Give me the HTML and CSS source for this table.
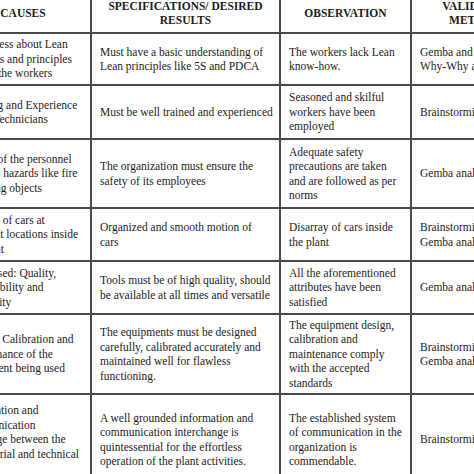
FILE: index.html
```html
<!DOCTYPE html>
<html>
<head>
<meta charset="utf-8">
<link rel="stylesheet" href="styles.css">
</head>
<body>
<div class="viewport">
<table class="grid">
  <colgroup>
    <col class="c-cause">
    <col class="c-spec">
    <col class="c-obs">
    <col class="c-val">
  </colgroup>
  <tr class="r-head">
    <th>CAUSES</th>
    <th>SPECIFICATIONS/ DESIRED<br>RESULTS</th>
    <th>OBSERVATION</th>
    <th>VALIDATION<br>METHODS</th>
  </tr>
  <tr class="r1">
    <td class="cause">Awareness about Lean<br>concepts and principles<br>among the workers</td>
    <td>Must have a basic understanding of<br>Lean principles like 5S and PDCA</td>
    <td>The workers lack Lean<br>know-how.</td>
    <td>Gemba and<br>Why-Why analysis</td>
  </tr>
  <tr class="r2">
    <td class="cause">Training and Experience<br>of the Technicians</td>
    <td>Must be well trained and experienced</td>
    <td>Seasoned and skilful<br>workers have been<br>employed</td>
    <td>Brainstorming</td>
  </tr>
  <tr class="r3">
    <td class="cause">Health of the personnel<br>towards hazards like fire<br>or falling objects</td>
    <td>The organization must ensure the<br>safety of its employees</td>
    <td>Adequate safety<br>precautions are taken<br>and are followed as per<br>norms</td>
    <td>Gemba analysis</td>
  </tr>
  <tr class="r4">
    <td class="cause">Parking of cars at<br>different locations inside<br>the plant</td>
    <td>Organized and smooth motion of<br>cars</td>
    <td>Disarray of cars inside<br>the plant</td>
    <td>Brainstorming,<br>Gemba analysis</td>
  </tr>
  <tr class="r5">
    <td class="cause">Tools used: Quality,<br>Accessibility and<br>Versatility</td>
    <td>Tools must be of high quality, should<br>be available at all times and versatile</td>
    <td>All the aforementioned<br>attributes have been<br>satisfied</td>
    <td>Gemba analysis</td>
  </tr>
  <tr class="r6">
    <td class="cause">Design, Calibration and<br>Maintenance of the<br>equipment being used</td>
    <td>The equipments must be designed<br>carefully, calibrated accurately and<br>maintained well for flawless<br>functioning.</td>
    <td>The equipment design,<br>calibration and<br>maintenance comply<br>with the accepted<br>standards</td>
    <td>Brainstorming,<br>Gemba analysis</td>
  </tr>
  <tr class="r7">
    <td class="cause">Information and<br>communication<br>exchange between the<br>managerial and technical<br>staff</td>
    <td>A well grounded information and<br>communication interchange is<br>quintessential for the effortless<br>operation of the plant activities.</td>
    <td>The established system<br>of communication in the<br>organization is<br>commendable.</td>
    <td>Brainstorming</td>
  </tr>
</table>
</div>
</body>
</html>
```

FILE: styles.css
```css
html, body {
  margin: 0;
  padding: 0;
  background: #ffffff;
}
body {
  width: 474px;
  height: 474px;
  overflow: hidden;
}
.viewport {
  width: 474px;
  height: 474px;
  overflow: hidden;
}
.grid {
  border-collapse: collapse;
  table-layout: fixed;
  width: 591px;
  margin-left: -46px;
  margin-top: -8px;
  font-family: "Liberation Serif", "Times New Roman", serif;
  font-size: 11.5px;
  line-height: 14.5px;
  color: #1c1c1c;
}
.c-cause { width: 136px; }
.c-spec { width: 189px; }
.c-obs { width: 131px; }
.c-val { width: 135px; }
.grid th,
.grid td {
  border: 2px solid #4a4a4a;
  padding: 0 8px;
  vertical-align: middle;
  text-align: left;
  white-space: nowrap;
  overflow: hidden;
}
.grid th {
  font-weight: bold;
  text-align: center;
}
.r-head { height: 40px; }
.r1 { height: 52px; }
.r2 { height: 54px; }
.r3 { height: 69px; }
.r4 { height: 53px; }
.r5 { height: 53px; }
.r6 { height: 80px; }
.r7 { height: 91px; }
```
